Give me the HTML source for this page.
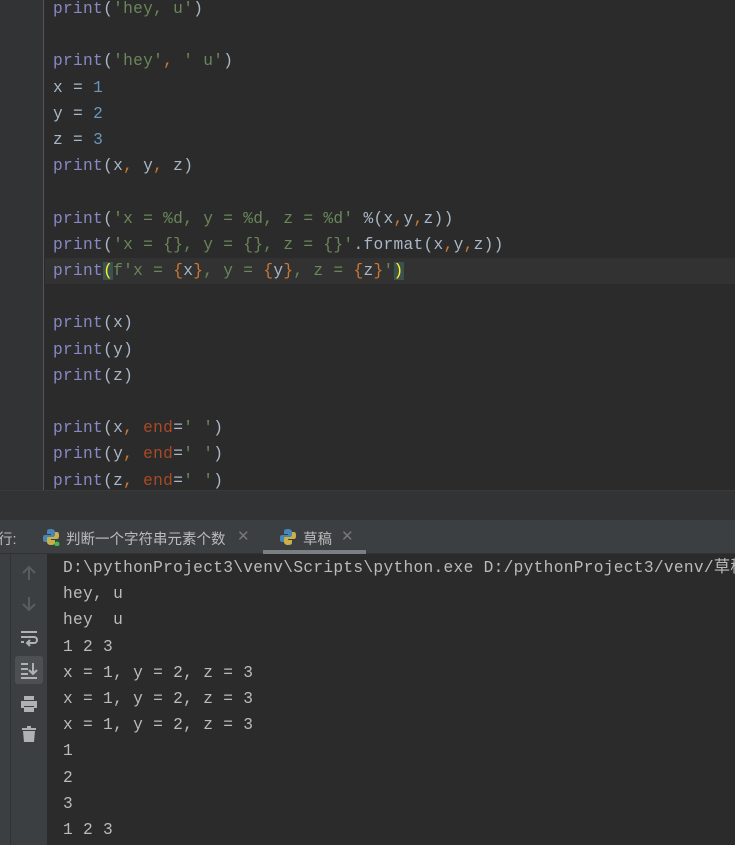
<!DOCTYPE html>
<html><head><meta charset="utf-8"><style>
*{margin:0;padding:0;box-sizing:border-box}
body{width:735px;height:845px;overflow:hidden;background:#2b2b2b;position:relative;font-family:"Liberation Mono","Noto Sans CJK SC",monospace;font-size:16.2px;color:#a9b7c6}
.gut{position:absolute;left:0;top:0;width:44px;height:490px;background:#313335;border-right:1px solid #555}
.code{position:absolute;left:53px;top:-4px;line-height:26.2px;white-space:pre;letter-spacing:0.3px}
.cur{position:absolute;left:45px;top:258px;width:690px;height:26px;background:#323232}
.p{color:#8888c6}.s{color:#6a8759}.n{color:#6897bb}.c{color:#cc7832}.k{color:#aa4926}
.bm{background:#3b514d;color:#ffef28}
.gap{position:absolute;left:0;top:490px;width:735px;height:30px;background:#313335;border-top:1px solid #3a3a3a}
.tabs{position:absolute;left:0;top:520px;width:735px;height:34px;background:#3c3f41;border-bottom:1px solid #323232;font-family:"Liberation Sans","Noto Sans CJK SC",sans-serif;font-size:14.5px;color:#bbb}
.tabs span{position:absolute;top:8px}
.x{color:#777;font-size:15px}
.ul{position:absolute;left:263px;top:550px;width:103px;height:4px;background:#7b7e82}
.side{position:absolute;left:0;top:554px;width:11px;height:291px;background:#3c3f41;border-right:1px solid #323232}
.tb{position:absolute;left:11px;top:554px;width:37px;height:291px;background:#3c3f41;border-right:1px solid #2b2b2b}
.con{position:absolute;left:63px;top:555px;line-height:26.2px;white-space:pre;color:#bbbbbb;letter-spacing:0.3px}
.ic{position:absolute;left:19px;width:20px;height:20px}
</style></head><body>
<div class="gut"></div>
<div class="cur"></div>
<div class="code"><span class="p">print</span>(<span class="s">'hey, u'</span>)

<span class="p">print</span>(<span class="s">'hey'</span><span class="c">,</span> <span class="s">' u'</span>)
x = <span class="n">1</span>
y = <span class="n">2</span>
z = <span class="n">3</span>
<span class="p">print</span>(x<span class="c">,</span> y<span class="c">,</span> z)

<span class="p">print</span>(<span class="s">'x = %d, y = %d, z = %d'</span> %(x<span class="c">,</span>y<span class="c">,</span>z))
<span class="p">print</span>(<span class="s">'x = {}, y = {}, z = {}'</span>.format(x<span class="c">,</span>y<span class="c">,</span>z))
<span class="p">print</span><span class="bm">(</span><span class="s">f'x = </span><span class="c">{</span>x<span class="c">}</span><span class="s">, y = </span><span class="c">{</span>y<span class="c">}</span><span class="s">, z = </span><span class="c">{</span>z<span class="c">}</span><span class="s">'</span><span class="bm">)</span>

<span class="p">print</span>(x)
<span class="p">print</span>(y)
<span class="p">print</span>(z)

<span class="p">print</span>(x<span class="c">,</span> <span class="k">end</span>=<span class="s">' '</span>)
<span class="p">print</span>(y<span class="c">,</span> <span class="k">end</span>=<span class="s">' '</span>)
<span class="p">print</span>(z<span class="c">,</span> <span class="k">end</span>=<span class="s">' '</span>)</div>
<div class="gap"></div>
<div class="tabs">
<span style="left:-2px">行:</span>
<svg style="position:absolute;left:42px;top:8px" width="18" height="18" viewBox="0 0 18 18"><path d="M9 1c-4 0-4 1.5-4 3v2h4v1H3c-2 0-2 2-2 3.5S1 14 3 14h2v-2.5c0-1.5 1-2.5 2.5-2.5h4C13 9 13 8 13 7V4c0-2-2-3-4-3z" fill="#4a86b5"/><path d="M9 17c4 0 4-1.5 4-3v-2H9v-1h6c2 0 2-2 2-3.5S17 4 15 4h-2v2.5c0 1.5-1 2.5-2.5 2.5h-4C5 9 5 10 5 11v3c0 2 2 3 4 3z" fill="#c9b04a"/><circle cx="15" cy="16" r="2.5" fill="#3fb950"/></svg>
<span style="left:66px">判断一个字符串元素个数</span><span class="x" style="left:237px;top:7px">✕</span>
<svg style="position:absolute;left:279px;top:8px" width="18" height="18" viewBox="0 0 18 18"><path d="M9 1c-4 0-4 1.5-4 3v2h4v1H3c-2 0-2 2-2 3.5S1 14 3 14h2v-2.5c0-1.5 1-2.5 2.5-2.5h4C13 9 13 8 13 7V4c0-2-2-3-4-3z" fill="#4a86b5"/><path d="M9 17c4 0 4-1.5 4-3v-2H9v-1h6c2 0 2-2 2-3.5S17 4 15 4h-2v2.5c0 1.5-1 2.5-2.5 2.5h-4C5 9 5 10 5 11v3c0 2 2 3 4 3z" fill="#c9b04a"/></svg>
<span style="left:303px">草稿</span><span class="x" style="left:341px;top:7px">✕</span>
</div>
<div class="ul"></div>
<div class="side"></div>
<div class="tb"></div>
<svg class="ic" style="top:563px" viewBox="0 0 20 20"><path d="M10 17V4M4 10l6-6 6 6" stroke="#5a5d60" stroke-width="2" fill="none"/></svg>
<svg class="ic" style="top:594px" viewBox="0 0 20 20"><path d="M10 3v13M4 10l6 6 6-6" stroke="#5a5d60" stroke-width="2" fill="none"/></svg>
<svg class="ic" style="top:628px" viewBox="0 0 20 20"><path d="M2 4h16M2 9h13a3 3 0 010 6H9M11 12l-3 3 3 3M2 14h3" stroke="#afb1b3" stroke-width="2" fill="none"/></svg>
<div style="position:absolute;left:15px;top:656px;width:28px;height:28px;background:#4c5052;border-radius:3px"></div>
<svg class="ic" style="top:660px" viewBox="0 0 20 20"><path d="M2 4h7M2 9h7M2 14h7M2 18h16M14 3v11M10 10l4 4 4-4" stroke="#afb1b3" stroke-width="2" fill="none"/></svg>
<svg class="ic" style="top:694px" viewBox="0 0 20 20"><path d="M5 2h10v4H5zM2 7h16v7h-3v-2H5v2H2zM5 13h10v5H5z" fill="#afb1b3"/></svg>
<svg class="ic" style="top:724px" viewBox="0 0 20 20"><path d="M3 4h14v2H3zM8 2h4v2H8zM4 7h12l-1 11H5z" fill="#afb1b3"/></svg>
<div class="con">D:\pythonProject3\venv\Scripts\python.exe D:/pythonProject3/venv/草稿
hey, u
hey  u
1 2 3
x = 1, y = 2, z = 3
x = 1, y = 2, z = 3
x = 1, y = 2, z = 3
1
2
3
1 2 3</div>
</body></html>
